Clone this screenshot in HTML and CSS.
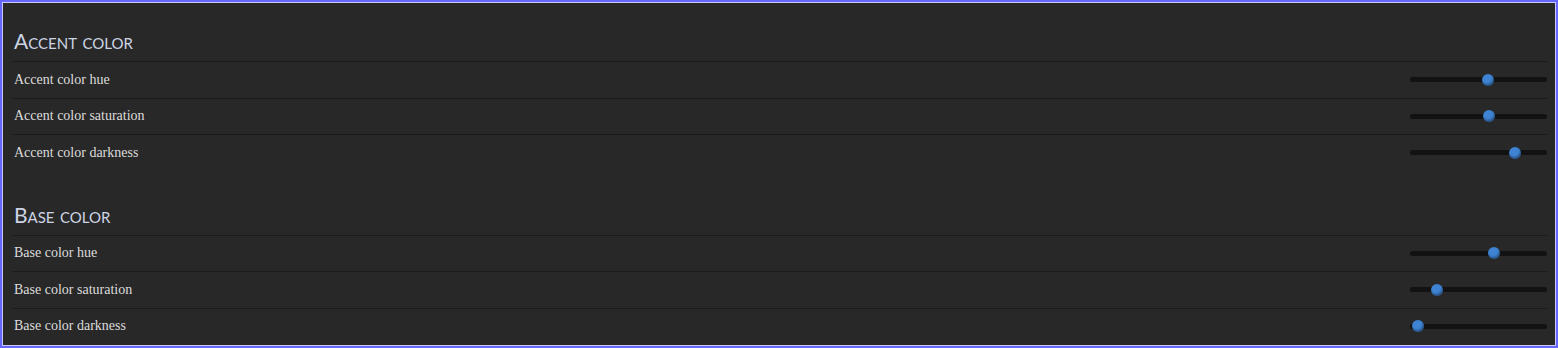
FILE: index.html
```html
<!DOCTYPE html>
<html lang="en">
  <head>
    <meta charset="UTF-8" />
    <title>Theme colors</title>
    <link rel="stylesheet" href="styles.css">
  </head>
  <body>
    <div class="settings">
      <div class="section">
        <h2 class="section-title">Accent color</h2>
        <div class="row">
          <label for="accent-hue">Accent color hue</label>
          <input type="range" id="accent-hue" min="0" max="100" step="0.1" value="57.6" />
        </div>
        <div class="row">
          <label for="accent-sat">Accent color saturation</label>
          <input type="range" id="accent-sat" min="0" max="100" step="0.1" value="58.4" />
        </div>
        <div class="row">
          <label for="accent-dark">Accent color darkness</label>
          <input type="range" id="accent-dark" min="0" max="100" step="0.1" value="79.2" />
        </div>
      </div>

      <div class="section">
        <h2 class="section-title">Base color</h2>
        <div class="row">
          <label for="base-hue">Base color hue</label>
          <input type="range" id="base-hue" min="0" max="100" step="0.1" value="62.4" />
        </div>
        <div class="row">
          <label for="base-sat">Base color saturation</label>
          <input type="range" id="base-sat" min="0" max="100" step="0.1" value="16.8" />
        </div>
        <div class="row">
          <label for="base-dark">Base color darkness</label>
          <input type="range" id="base-dark" min="0" max="100" step="0.1" value="1.6" />
        </div>
      </div>
    </div>
  </body>
</html>
```

FILE: styles.css
```css
html,
body {
  margin: 0;
  padding: 0;
  height: 100%;
  background-color: #282828;
}

.settings {
  box-sizing: border-box;
  height: 100vh;
  overflow: hidden;
  padding: 26px 9px 0 11px;
  border: 2px solid #6767ff;
  box-shadow: inset 0 0 0 1px #c9c9ff;
  background-color: #282828;
}

.section + .section {
  margin-top: 31px;
}

.section-title {
  margin: 0;
  padding: 0 0 7px 1px;
  font-family: Lato, "Open Sans", sans-serif;
  font-size: 21px;
  font-weight: normal;
  font-variant: small-caps;
  line-height: 26px;
  color: #cdd5e4;
  border-bottom: 1px solid #1b1b1b;
}

.row {
  display: flex;
  align-items: center;
  justify-content: space-between;
  height: 35.5px;
  padding-left: 1px;
}

.row + .row {
  border-top: 1px solid #1b1b1b;
}

.row label {
  font-family: "Liberation Serif", "Times New Roman", serif;
  font-size: 14px;
  color: #dcdcdc;
}

input[type="range"] {
  -webkit-appearance: none;
  appearance: none;
  width: 137px;
  height: 5px;
  margin: 0;
  border-radius: 3px;
  background-color: #121212;
  outline: none;
}

input[type="range"]::-webkit-slider-thumb {
  -webkit-appearance: none;
  width: 12px;
  height: 12px;
  border-radius: 50%;
  background-color: #3f84d4;
  box-shadow: inset -1px -2px 2px rgba(0, 0, 0, 0.35);
  cursor: pointer;
}
```
